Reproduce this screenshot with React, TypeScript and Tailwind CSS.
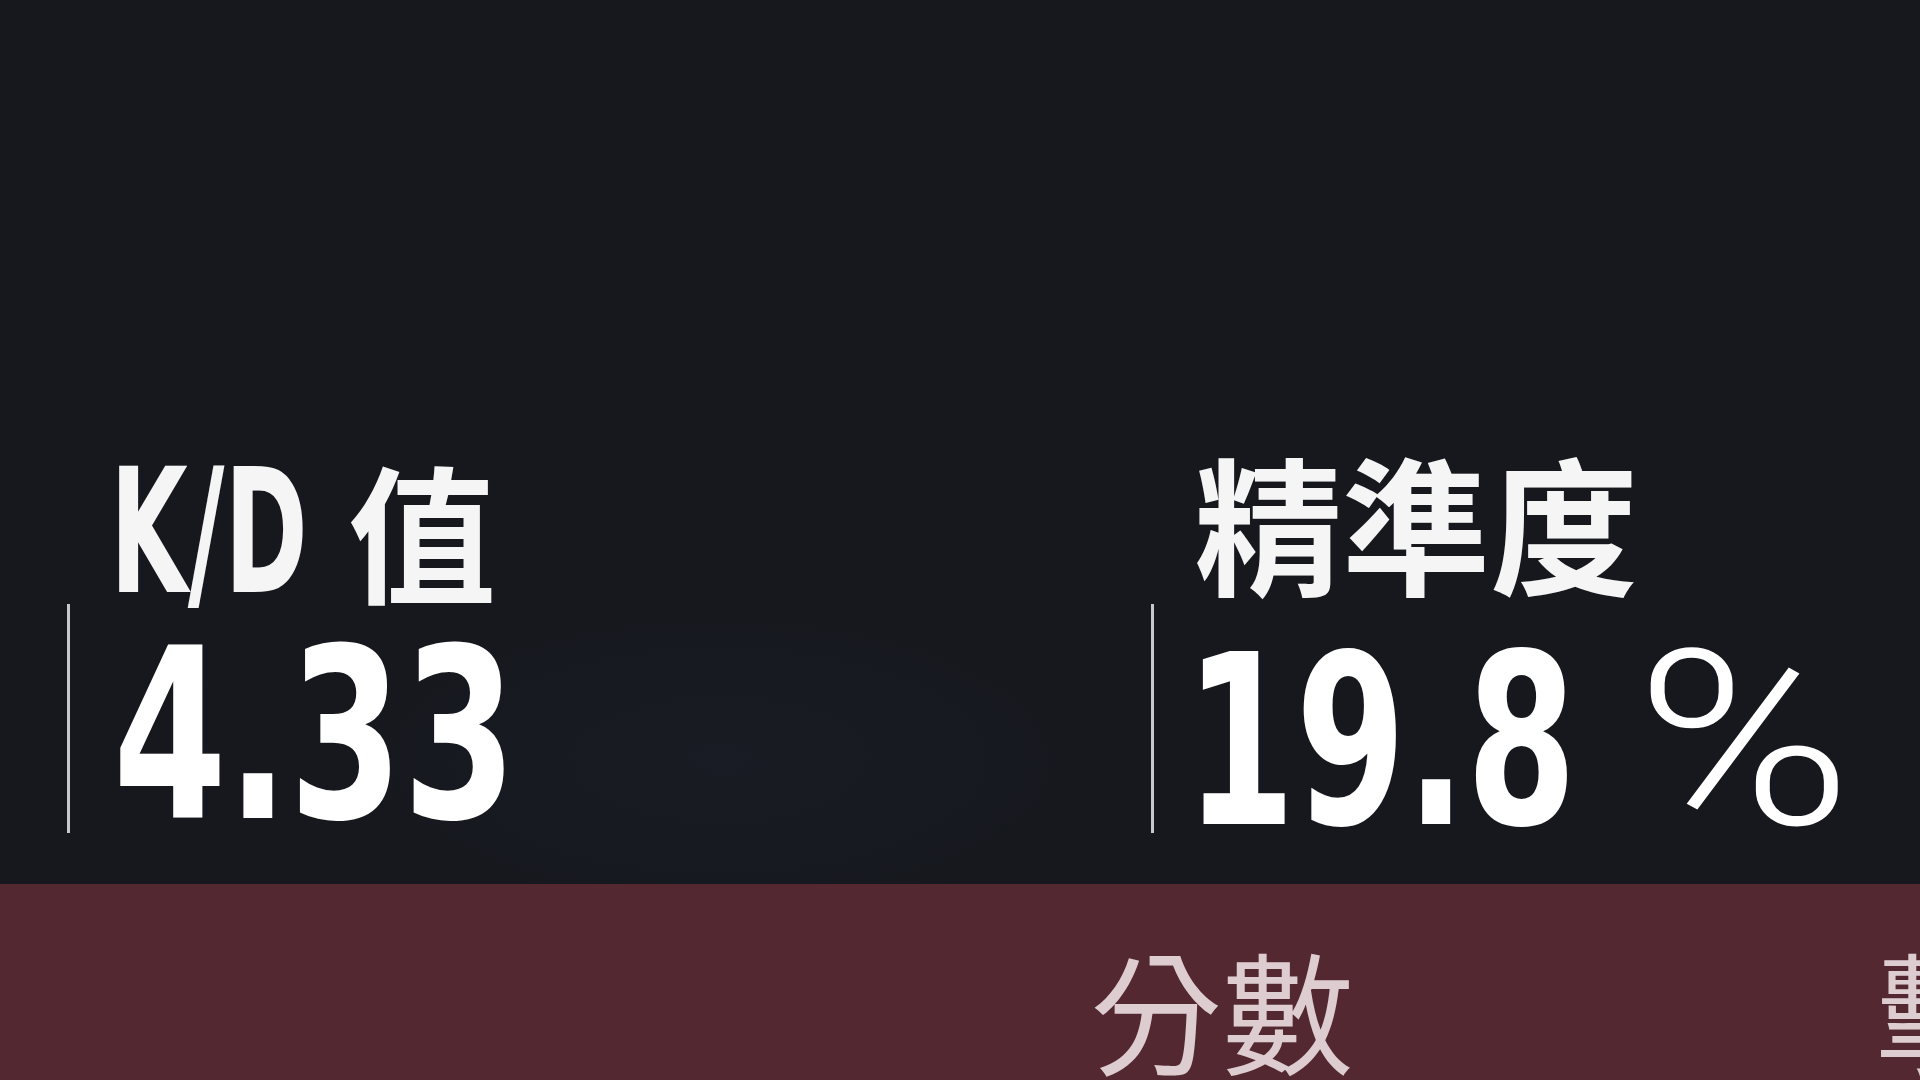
const latin = "font-['DejaVu_Sans','Liberation_Sans',sans-serif]";
const cjk = "font-['Noto_Sans_CJK_TC','Noto_Sans',sans-serif]";

function Stat({ label, value, width }: { label: React.ReactNode; value: React.ReactNode; width: string }) {
  return (
    <div className={`${width} flex flex-col shrink-0`}>
      {/* label */}
      <div className="h-[158px] pl-[43px] leading-none whitespace-nowrap text-[#f5f5f5]">{label}</div>
      {/* bar + value */}
      <div className="flex items-start">
        <div className="w-[3px] h-[229px] bg-[#c8c8ca]" />
        <div className="ml-[43px] mt-[14px] leading-none whitespace-nowrap text-white">{value}</div>
      </div>
    </div>
  );
}

export default function App() {
  return (
    <div className="w-[1920px] h-[1080px] overflow-hidden flex flex-col bg-[#16181e]">
      {/* stats */}
      <div className="h-[884px] pt-[446px] pl-[67px] flex bg-[radial-gradient(ellipse_380px_160px_at_720px_760px,#191c24,transparent)]">
        <Stat
          width="w-[1084px]"
          label={
            <>
              <span className={`${latin} inline-block w-[200px] text-[173px] font-bold leading-none`}>
                <span className="inline-block origin-left scale-x-[0.58]">K/D</span>
              </span>
              <span className={`${cjk} ml-[38px] text-[148px] font-bold leading-none`}>值</span>
            </>
          }
          value={
            <span className={`${latin} inline-block w-[400px] text-[237px] font-bold leading-none`}>
              <span className="inline-block origin-left scale-x-[0.69]">4.33</span>
            </span>
          }
        />
        <Stat
          width="w-[700px]"
          label={<span className={`${cjk} text-[148px] font-bold leading-none`}>精準度</span>}
          value={
            <>
              <span className={`${latin} inline-block w-[378px] -ml-[12px] text-[237px] font-bold leading-none`}>
                <span className="inline-block origin-left scale-x-[0.67]">19.8</span>
              </span>
              <span className="inline-block font-['Roboto',sans-serif] font-light ml-[72px] text-[245px] leading-none origin-left scale-x-[1.2]">%</span>
            </>
          }
        />
      </div>

      {/* score header band */}
      <div className="flex-1 bg-[#532830] pt-[58px] pl-[1090px] flex whitespace-nowrap">
        <span className={`${cjk} text-[132px] leading-none text-[#ddcdd1]`}>分數</span>
        <span className={`${cjk} ml-[522px] text-[132px] leading-none text-[#ddcdd1]`}>擊殺</span>
      </div>
    </div>
  );
}
